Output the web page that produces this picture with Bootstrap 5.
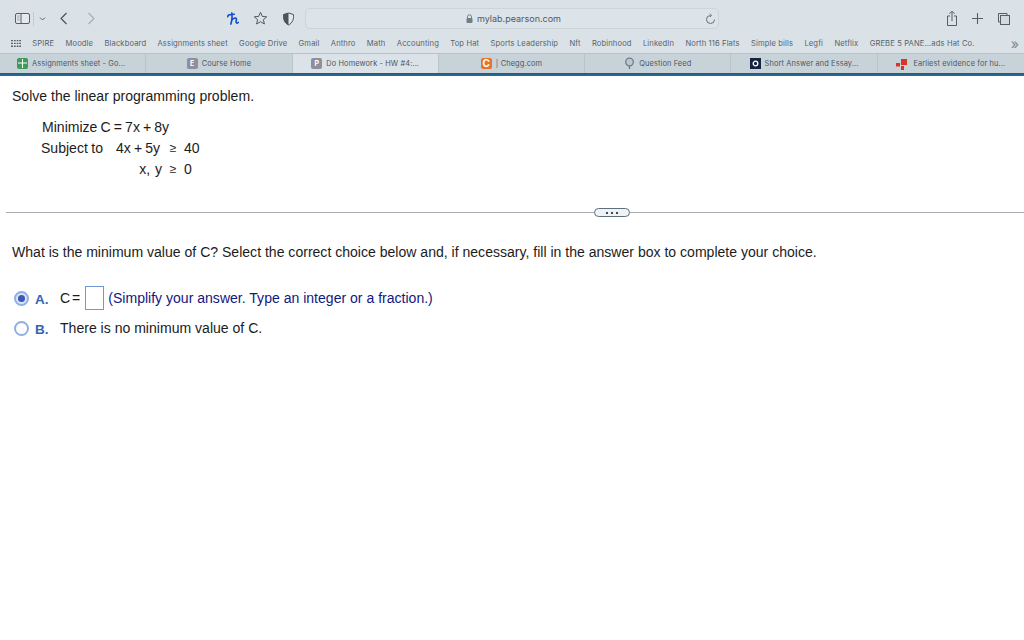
<!DOCTYPE html>
<html lang="en">
<head>
<meta charset="utf-8">
<title>Pearson MyLab</title>
<link href="https://cdn.jsdelivr.net/npm/bootstrap@5.3.0/dist/css/bootstrap.min.css" rel="stylesheet">
<style>
html,body{height:100%;background:#fff;overflow:hidden}
body{font-family:"Liberation Sans",Arial,sans-serif;color:#1c1c1c}
.chrome-top{background:#dae2e7;font-family:Inter,"Liberation Sans",sans-serif;color:#4d5a62}
.tool-row{height:33px;padding:4px 0 0 15px}
.tool-row svg{display:block;flex:none}
.side-sep{width:1px;height:14px;background:#c3ccd1;margin-left:3px}
.chev{margin-left:5px}
.back-arrow{margin-left:13px}
.fwd-arrow{margin-left:19px}
.brand-h{margin-left:131px}
.star-ico{margin-left:14px}
.shield-ico{margin-left:15px}
.url-box{width:414px;height:21px;margin-left:11px;border:1px solid #ccd5da;border-radius:5px;background:#dce4e9;font-size:9px;color:#4e5a62}
.lock-ico{margin-left:160px}
.reload{margin-left:auto;margin-right:2px}
.share-ico{margin-left:227px}
.plus-ico{margin-left:13px}
.tabs-ico{margin-left:13px}
.mark-row{height:20px;padding:1px 0 0 11px;font-size:7.6px;color:#56636b;white-space:nowrap;gap:11.35px;letter-spacing:.12px}
.more-mark{margin-left:auto;margin-right:5px;font-size:14px;line-height:1;color:#7a868e}
.tab-row{height:20px;border-top:1px solid #b8c3c9;background:#c8d3d9;font-size:7.4px;letter-spacing:.12px;color:#4a575f;display:grid;grid-template-columns:repeat(7,minmax(0,1fr))}
.tab-cell{height:100%;gap:4px;border-right:1px solid #b8c4ca;white-space:nowrap}
.tab-cell:last-child{border-right:0}
.tab-first{padding-left:17px}
.tab-on{background:#dbe3e8}
.blue-line{height:3px;background:linear-gradient(#1e5a7e,#2d6f95)}
.fav{width:11px;height:11px;flex:none;border-radius:2px;color:#fff;font-size:7px;font-weight:700;line-height:11px;text-align:center}
.fav-gray{background:#8e8e9c}
.fav-orange{background:#e8742a;font-size:10px}
.qa{font-size:14.05px;line-height:21px}
.stem{padding:10px 12px 0}
.prob{margin:10px 0 0 29px;display:grid;grid-template-columns:75px 46px 22px auto;justify-content:start;line-height:21px}
.prob-span{grid-column:1/5;padding-left:1px}
.eq-cell{word-spacing:-.8px}
.sub-cell{word-spacing:-.5px}
.xy-cell{word-spacing:1px}
.geq{font-size:12px;text-align:center}
.divide{margin:32px 0 0 6px;height:1px;background:#a7adb2;position:relative}
.grip{position:absolute;left:588px;top:-4px;width:36px;height:9px;border:1.500px solid #5f6f7b;border-radius:5px;background:#f0f3f5;font-size:0}
.grip-dots{gap:3px;height:100%}
.grip-dots i{width:2px;height:2px;background:#3e4c58;display:block}
.ask{padding:29px 12px 0}
.opts{padding:20px 0 0 14px}
.opt-row{height:30px;color:#12187f}
.radio-mark{width:15px;height:15px;border:2px solid #8fb0e4;border-radius:50%;flex:none;background:#fff}
.radio-on{background:#d9e4f6;position:relative}
.radio-on::after{content:"";position:absolute;inset:2px;border-radius:50%;background:#3a58b8}
.opt-key{width:25px;margin-left:6px;color:#2f66b8;font-weight:700;font-size:13.500px;padding-top:2px}
.opt-dark{color:#1c1c1c}
.eq-short{word-spacing:-2px}
.ans-box{width:19px;height:24px;border:1.500px solid #6f98d8;margin:0 4px 0 5px;background:#fff}
</style>
</head>
<body>
<div class="chrome-top">
  <div class="tool-row d-flex align-items-center">
    <svg width="15" height="13" viewBox="0 0 15 13" fill="none" stroke="#555f66"><rect x=".5" y="1.500" width="14" height="10" rx="1.500" fill="#e3e9ec"/><path d="M6 1.500v10" /><path d="M2 4h2.500M2 6h2.500M2 8h2.500" stroke="#8a949a" stroke-width=".8"/></svg>
    <span class="side-sep"></span>
    <svg class="chev" width="7" height="6" viewBox="0 0 7 6" fill="none" stroke="#59656c"><path d="M1 1.500l2.500 2.500 2.500-2.500"/></svg>
    <svg class="back-arrow" width="9" height="13" viewBox="0 0 9 13" fill="none" stroke="#444f56" stroke-width="1.100"><path d="M7.500 1L2 6.500 7.500 12"/></svg>
    <svg class="fwd-arrow" width="9" height="13" viewBox="0 0 9 13" fill="none" stroke="#a3adb3" stroke-width="1.100"><path d="M1.500 1L7 6.500 1.500 12"/></svg>
    <svg class="brand-h" width="12" height="15" viewBox="0 0 14 15" fill="none" stroke="#1450c8" stroke-width="1.900" stroke-linecap="round"><path d="M.8 5.500C.8 3.500 3 2.500 8.500 2.500M5.500 1C6.200 5 5.800 10 4.500 14M5.500 9.500C7 7 10.500 6.200 11 8c.3 1.500-.8 3-.3 4.200.4 1 1.800.8 2.500-.2"/></svg>
    <svg class="star-ico" width="15" height="15" viewBox="0 0 15 15" fill="none" stroke="#4f5a61"><path d="M7.500 1.300l1.800 4.100 4.400.4-3.300 2.900 1 4.300-3.900-2.300-3.900 2.300 1-4.300L1.300 5.800l4.400-.4z"/></svg>
    <svg class="shield-ico" width="11" height="14" viewBox="0 0 11 14"><path d="M5.500 1L10.500 2.500C11 7 9.500 11 5.500 13 1.500 11 0 7 .5 2.500z" fill="#e3e9ec" stroke="#4a545b"/><path d="M5.500 1L.5 2.500C0 7 1.500 11 5.500 13z" fill="#4a545b"/></svg>
    <div class="url-box d-flex align-items-center">
      <svg class="lock-ico" width="7" height="9" viewBox="0 0 7 9"><path d="M1.500 4V2.800a2 2 0 0 1 4 0V4" fill="none" stroke="#727d84"/><rect x=".5" y="4" width="6" height="5" rx="1" fill="#727d84"/></svg>
      <span class="ms-1">mylab.pearson.com</span>
      <svg class="reload" width="11" height="12" viewBox="0 0 11 12" fill="none" stroke="#59656c" stroke-width=".9"><path d="M5.500 2.500a4 4 0 1 0 4 4M5 .8l1.500 1.700L5 4"/></svg>
    </div>
    <svg class="share-ico" width="12" height="17" viewBox="0 0 12 17" fill="none" stroke="#555f66"><path d="M4 6H1.500v9.500h9V6H8M6 11V1.500M3.500 3.700L6 1.200l2.500 2.500"/></svg>
    <svg class="plus-ico" width="13" height="13" viewBox="0 0 13 13" fill="none" stroke="#555f66" stroke-width="1.100"><path d="M6.500 1v11M1 6.500h11"/></svg>
    <svg class="tabs-ico" width="14" height="14" viewBox="0 0 14 14" fill="none" stroke="#555f66"><path d="M10 3V1.500H1.500V10H3"/><rect x="3.500" y="3.500" width="9" height="9" fill="#d3dbe0"/></svg>
  </div>
  <div class="mark-row d-flex align-items-center">
    <svg width="10" height="7" viewBox="0 0 10 7" fill="#56636b"><path d="M0 0h2v1.300H0zM3 0h1.700v1.300H3zM5.700 0h1.700v1.300H5.700zM8.200 0H10v1.300H8.200zM0 2.800h2v1.300H0zM3 2.800h1.700v1.300H3zM5.700 2.800h1.700v1.300H5.700zM8.200 2.800H10v1.300H8.200zM0 5.600h2v1.300H0zM3 5.600h1.700v1.300H3zM5.700 5.600h1.700v1.300H5.700zM8.200 5.600H10v1.300H8.200z"/></svg>
    <span>SPIRE</span><span>Moodle</span><span>Blackboard</span><span>Assignments sheet</span><span>Google Drive</span><span>Gmail</span><span>Anthro</span><span>Math</span><span>Accounting</span><span>Top Hat</span><span>Sports Leadership</span><span>Nft</span><span>Robinhood</span><span>LinkedIn</span><span>North 116 Flats</span><span>Simple bills</span><span>Legfi</span><span>Netflix</span><span>GREBE 5 PANE...ads Hat Co.</span>
    <span class="more-mark">»</span>
  </div>
  <div class="tab-row">
    <div class="tab-cell tab-first d-flex align-items-center"><svg class="fav" viewBox="0 0 11 11"><rect width="11" height="11" fill="#3f9b5c"/><path d="M5.500 1v9M1 5h9" stroke="#fff"/></svg><span>Assignments sheet - Go...</span></div>
    <div class="tab-cell d-flex align-items-center justify-content-center"><span class="fav fav-gray">E</span><span>Course Home</span></div>
    <div class="tab-cell tab-on d-flex align-items-center justify-content-center"><span class="fav fav-gray">P</span><span>Do Homework - HW #4:...</span></div>
    <div class="tab-cell d-flex align-items-center justify-content-center"><span class="fav fav-orange">C</span><span>| Chegg.com</span></div>
    <div class="tab-cell d-flex align-items-center justify-content-center"><svg width="11" height="13" viewBox="0 0 11 13" fill="none" stroke="#6f7d85" stroke-width="1.300"><circle cx="5.500" cy="5" r="3.800" fill="#b9c9d1"/><path d="M5.500 9v3"/></svg><span>Question Feed</span></div>
    <div class="tab-cell d-flex align-items-center justify-content-center"><svg width="11" height="11" viewBox="0 0 11 11" fill="none"><rect width="11" height="11" fill="#14243f"/><circle cx="5.500" cy="5.500" r="2.300" stroke="#fff" stroke-width="1.300"/></svg><span>Short Answer and Essay...</span></div>
    <div class="tab-cell d-flex align-items-center justify-content-center"><svg width="13" height="12" viewBox="0 0 13 12" fill="#d8352a"><rect x="0" y="5" width="4" height="3.500"/><rect x="5" y="1" width="6" height="6"/><rect x="5" y="8" width="3" height="4"/></svg><span>Earliest evidence for hu...</span></div>
  </div>
  <div class="blue-line"></div>
</div>
<main class="qa">
  <div class="stem">
    <div>Solve the linear programming problem.</div>
    <div class="prob">
      <div class="prob-span eq-cell">Minimize C = 7x + 8y</div>
      <div class="sub-cell">Subject to</div><div class="eq-cell">4x + 5y</div><div class="geq">≥</div><div>40</div>
      <div></div><div class="text-end xy-cell">x, y</div><div class="geq">≥</div><div>0</div>
    </div>
  </div>
  <div class="divide"><div class="grip"><div class="grip-dots d-flex justify-content-center align-items-center"><i></i><i></i><i></i></div></div></div>
  <div class="ask">What is the minimum value of C? Select the correct choice below and, if necessary, fill in the answer box to complete your choice.</div>
  <div class="opts">
    <div class="opt-row d-flex align-items-center"><span class="radio-mark radio-on"></span><span class="opt-key">A.</span><span class="opt-dark eq-short">C =</span><span class="ans-box"></span><span>(Simplify your answer. Type an integer or a fraction.)</span></div>
    <div class="opt-row d-flex align-items-center"><span class="radio-mark"></span><span class="opt-key">B.</span><span class="opt-dark">There is no minimum value of C.</span></div>
  </div>
</main>
<script src="https://cdn.jsdelivr.net/npm/bootstrap@5.3.0/dist/js/bootstrap.bundle.min.js"></script>
</body>
</html>
